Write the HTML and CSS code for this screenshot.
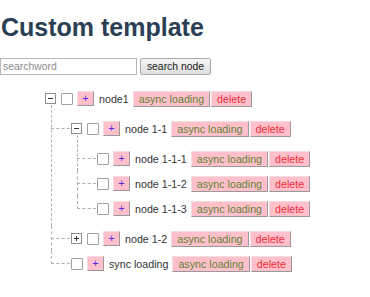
FILE: index.html
```html
<!DOCTYPE html>
<html>
<head>
<meta charset="utf-8">
<link rel="stylesheet" href="styles.css">
</head>
<body>
<h1 class="title">Custom template</h1>
<div class="search">
  <input class="search-input" type="text" placeholder="searchword">
  <button class="search-btn">search node</button>
</div>
<ul class="tree">
  <li>
    <div class="row">
      <span class="tog minus"></span><span class="chk"></span><button class="add">+</button><span class="lbl">node1</span><button class="act async">async loading</button><button class="act del">delete</button>
    </div>
    <ul class="children">
      <li>
        <div class="row">
          <span class="tog minus"></span><span class="chk"></span><button class="add">+</button><span class="lbl">node 1-1</span><button class="act async">async loading</button><button class="act del">delete</button>
        </div>
        <ul class="children">
          <li>
            <div class="row">
              <span class="chk"></span><button class="add">+</button><span class="lbl">node 1-1-1</span><button class="act async">async loading</button><button class="act del">delete</button>
            </div>
          </li>
          <li>
            <div class="row">
              <span class="chk"></span><button class="add">+</button><span class="lbl">node 1-1-2</span><button class="act async">async loading</button><button class="act del">delete</button>
            </div>
          </li>
          <li>
            <div class="row">
              <span class="chk"></span><button class="add">+</button><span class="lbl">node 1-1-3</span><button class="act async">async loading</button><button class="act del">delete</button>
            </div>
          </li>
        </ul>
      </li>
      <li>
        <div class="row">
          <span class="tog plus"></span><span class="chk"></span><button class="add">+</button><span class="lbl">node 1-2</span><button class="act async">async loading</button><button class="act del">delete</button>
        </div>
      </li>
      <li>
        <div class="row">
          <span class="chk"></span><button class="add">+</button><span class="lbl">sync loading</span><button class="act async">async loading</button><button class="act del">delete</button>
        </div>
      </li>
    </ul>
  </li>
</ul>
</body>
</html>
```

FILE: styles.css
```css
* { box-sizing: border-box; }
body {
  margin: 0;
  background: #fff;
  color: #333;
  font-family: "Liberation Sans", Arial, sans-serif;
}
.title {
  margin: 12px 0 0 1px;
  font-size: 25px;
  line-height: 30px;
  font-weight: bold;
  color: #2a3e54;
}
.search {
  display: flex;
  align-items: flex-start;
  margin-top: 16px;
  height: 17px;
}
.search-input {
  width: 137px;
  height: 17px;
  margin: 0 3px 0 0;
  padding: 0 2px;
  border: 1px solid #b8b8b8;
  font-family: "Liberation Sans", Arial, sans-serif;
  font-size: 10.4px;
  color: #333;
  outline: none;
}
.search-input::placeholder { color: #8c8c8c; }
.search-btn {
  width: 71px;
  height: 17px;
  margin: 0;
  padding: 0;
  border: 1px solid #a9a9a9;
  border-radius: 2px;
  background: linear-gradient(#f6f6f6, #dedede);
  font-family: "Liberation Sans", Arial, sans-serif;
  font-size: 10.4px;
  color: #222;
}
.tree, .children {
  list-style: none;
  margin: 0;
  padding: 0;
}
.tree { margin-top: 11px; padding-left: 45px; }
.children { padding: 5px 0 5px 26px; }
.children > li { position: relative; }
.children > li::before {
  content: "";
  position: absolute;
  left: -20px;
  top: 0;
  bottom: 0;
  border-left: 1px dashed #b0b0b0;
}
.children > li:first-child::before { top: -11px; }
.children > li:last-child::before { bottom: auto; height: 13px; }
.children > li::after {
  content: "";
  position: absolute;
  left: -20px;
  top: 12px;
  width: 19px;
  border-top: 1px dashed #b0b0b0;
}
.row {
  display: flex;
  align-items: center;
  height: 25px;
  font-size: 10.7px;
}
.tog {
  position: relative;
  width: 11px;
  height: 11px;
  margin-right: 5px;
  border: 1px solid #8e8e8e;
  background: #fff;
  flex: none;
}
.tog::before {
  content: "";
  position: absolute;
  left: 2px;
  top: 4px;
  width: 5px;
  height: 1px;
  background: #333;
}
.tog.plus::after {
  content: "";
  position: absolute;
  left: 4px;
  top: 2px;
  width: 1px;
  height: 5px;
  background: #333;
}
.chk {
  width: 12px;
  height: 12px;
  margin-right: 4px;
  border: 1px solid #a0a0a0;
  border-radius: 1px;
  background: #fff;
  flex: none;
}
.add {
  width: 17px;
  height: 15px;
  margin: 0 5px 0 0;
  padding: 0;
  border: 1px solid;
  border-color: #f2dde1 #999 #999 #f2dde1;
  background: #ffc0cb;
  color: #5a2ee0;
  font-family: "Liberation Sans", Arial, sans-serif;
  font-size: 11px;
  line-height: 13px;
  flex: none;
}
.lbl {
  margin-right: 4px;
  color: #333;
  white-space: nowrap;
}
.act {
  height: 16px;
  margin: 0;
  padding: 0 5px;
  border: 1px solid;
  border-color: #f2dde1 #999 #999 #f2dde1;
  background: #ffc0cb;
  font-family: "Liberation Sans", Arial, sans-serif;
  font-size: 10.7px;
  line-height: 14px;
  white-space: nowrap;
  flex: none;
}
.async { color: #5e8235; }
.del { margin-left: 1px; color: #ef2d3a; }
```
